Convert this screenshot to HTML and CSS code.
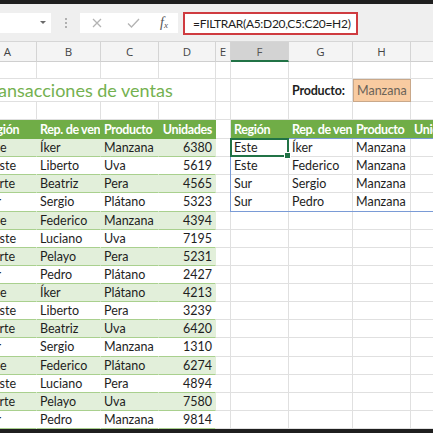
FILE: index.html
```html
<!DOCTYPE html>
<html lang="es">
<head>
<meta charset="utf-8">
<title>FILTRAR</title>
<link rel="stylesheet" href="styles.css">
</head>
<body>
<div class="topbar"></div>
<div class="fbar">
  <div class="namebox"><span class="caret"></span></div>
  <div class="dots"><i></i><i></i><i></i></div>
  <div class="fxbox">
    <svg class="ico-x" width="10" height="10" viewBox="0 0 10 10"><path d="M1 1L9 9M9 1L1 9" stroke="#b3b3b3" stroke-width="1.3" fill="none"/></svg>
    <svg class="ico-ok" width="13" height="10" viewBox="0 0 13 10"><path d="M1 5.5L4.5 9L12 1" stroke="#b3b3b3" stroke-width="1.3" fill="none"/></svg>
    <span class="fx">f<sub>x</sub></span>
  </div>
  <div class="formula">=FILTRAR(A5:D20,C5:C20=H2)</div>
</div>
<div class="sheet">
  <div class="grid">
    <div class="ch">A</div><div class="ch">B</div><div class="ch">C</div><div class="ch">D</div><div class="ch">E</div><div class="ch sel">F</div><div class="ch">G</div><div class="ch">H</div><div class="ch">I</div>

    <div class="c"></div><div class="c"></div><div class="c"></div><div class="c"></div><div class="c"></div><div class="c"></div><div class="c"></div><div class="c"></div><div class="c"></div>

    <div class="c a title">Transacciones de ventas</div><div class="c"></div><div class="c"></div><div class="c bold">Producto:</div><div class="c input">Manzana</div><div class="c"></div>

    <div class="c"></div><div class="c"></div><div class="c"></div><div class="c"></div><div class="c"></div><div class="c"></div><div class="c"></div><div class="c"></div><div class="c"></div>

    <div class="c a th">Región</div><div class="c th">Rep. de vendedor</div><div class="c th">Producto</div><div class="c th num">Unidades</div><div class="c"></div><div class="c th">Región</div><div class="c th">Rep. de vendedor</div><div class="c th">Producto</div><div class="c th">Unidades</div>

    <div class="c a b">Este</div><div class="c b">Íker</div><div class="c b">Manzana</div><div class="c b num">6380</div><div class="c"></div><div class="c">Este</div><div class="c">Íker</div><div class="c">Manzana</div><div class="c num">6380</div>
    <div class="c a w">Oeste</div><div class="c w">Liberto</div><div class="c w">Uva</div><div class="c w num">5619</div><div class="c"></div><div class="c">Este</div><div class="c">Federico</div><div class="c">Manzana</div><div class="c num">4394</div>
    <div class="c a b">Norte</div><div class="c b">Beatriz</div><div class="c b">Pera</div><div class="c b num">4565</div><div class="c"></div><div class="c">Sur</div><div class="c">Sergio</div><div class="c">Manzana</div><div class="c num">1310</div>
    <div class="c a w">Sur</div><div class="c w">Sergio</div><div class="c w">Plátano</div><div class="c w num">5323</div><div class="c"></div><div class="c">Sur</div><div class="c">Pedro</div><div class="c">Manzana</div><div class="c num">9814</div>
    <div class="c a b">Este</div><div class="c b">Federico</div><div class="c b">Manzana</div><div class="c b num">4394</div><div class="c"></div><div class="c"></div><div class="c"></div><div class="c"></div><div class="c"></div>
    <div class="c a w">Oeste</div><div class="c w">Luciano</div><div class="c w">Uva</div><div class="c w num">7195</div><div class="c"></div><div class="c"></div><div class="c"></div><div class="c"></div><div class="c"></div>
    <div class="c a b">Norte</div><div class="c b">Pelayo</div><div class="c b">Pera</div><div class="c b num">5231</div><div class="c"></div><div class="c"></div><div class="c"></div><div class="c"></div><div class="c"></div>
    <div class="c a w">Sur</div><div class="c w">Pedro</div><div class="c w">Plátano</div><div class="c w num">2427</div><div class="c"></div><div class="c"></div><div class="c"></div><div class="c"></div><div class="c"></div>
    <div class="c a b">Este</div><div class="c b">Íker</div><div class="c b">Plátano</div><div class="c b num">4213</div><div class="c"></div><div class="c"></div><div class="c"></div><div class="c"></div><div class="c"></div>
    <div class="c a w">Oeste</div><div class="c w">Liberto</div><div class="c w">Pera</div><div class="c w num">3239</div><div class="c"></div><div class="c"></div><div class="c"></div><div class="c"></div><div class="c"></div>
    <div class="c a b">Norte</div><div class="c b">Beatriz</div><div class="c b">Uva</div><div class="c b num">6420</div><div class="c"></div><div class="c"></div><div class="c"></div><div class="c"></div><div class="c"></div>
    <div class="c a w">Sur</div><div class="c w">Sergio</div><div class="c w">Manzana</div><div class="c w num">1310</div><div class="c"></div><div class="c"></div><div class="c"></div><div class="c"></div><div class="c"></div>
    <div class="c a b">Este</div><div class="c b">Federico</div><div class="c b">Plátano</div><div class="c b num">6274</div><div class="c"></div><div class="c"></div><div class="c"></div><div class="c"></div><div class="c"></div>
    <div class="c a w">Oeste</div><div class="c w">Luciano</div><div class="c w">Pera</div><div class="c w num">4894</div><div class="c"></div><div class="c"></div><div class="c"></div><div class="c"></div><div class="c"></div>
    <div class="c a b">Norte</div><div class="c b">Pelayo</div><div class="c b">Uva</div><div class="c b num">7580</div><div class="c"></div><div class="c"></div><div class="c"></div><div class="c"></div><div class="c"></div>
    <div class="c a w">Sur</div><div class="c w">Pedro</div><div class="c w">Manzana</div><div class="c w num">9814</div><div class="c"></div><div class="c"></div><div class="c"></div><div class="c"></div><div class="c"></div>

    <div class="spill"></div>
    <div class="cursor"><span class="handle"></span></div>
  </div>
</div>
<div class="bottombar"></div>
</body>
</html>
```

FILE: styles.css
```css
html, body {
  margin: 0;
  padding: 0;
  background: #ffffff;
  overflow: hidden;
}
body {
  width: 433px;
  height: 433px;
  font-family: Lato, "Liberation Sans", sans-serif;
  color: #1e1e1e;
}
.topbar {
  height: 4px;
  background: #1f1f1f;
}
.fbar {
  background: #efefef;
  border-bottom: 1px solid #d6d6d6;
  display: flex;
  align-items: flex-start;
  padding-top: 9px;
  box-sizing: border-box;
  height: 38px;
}
.namebox {
  width: 51px;
  height: 20px;
  background: #ffffff;
  position: relative;
  flex: none;
}
.caret {
  position: absolute;
  left: 40px;
  top: 8px;
  width: 0;
  height: 0;
  border-left: 3px solid transparent;
  border-right: 3px solid transparent;
  border-top: 3px solid #6a6a6a;
}
.dots {
  width: 29px;
  height: 20px;
  flex: none;
  display: flex;
  flex-direction: column;
  align-items: center;
  justify-content: center;
  gap: 2px;
}
.dots i {
  display: block;
  width: 2px;
  height: 2px;
  background: #b0b0b0;
}
.fxbox {
  width: 98px;
  height: 20px;
  background: #ffffff;
  flex: none;
  display: flex;
  align-items: center;
  padding-left: 12px;
  box-sizing: border-box;
}
.ico-x { margin-right: 25px; }
.ico-ok { margin-right: 20px; }
.fx {
  font-family: "Liberation Serif", serif;
  font-style: italic;
  font-size: 14px;
  color: #555555;
  line-height: 1;
}
.fx sub {
  font-size: 9px;
  vertical-align: -1px;
}
.formula {
  margin-left: 5px;
  margin-top: -1px;
  width: 175px;
  height: 23px;
  box-sizing: border-box;
  border: 2px solid #cf3b40;
  background: #ffffff;
  font-size: 12px;
  line-height: 19px;
  padding-left: 8px;
  letter-spacing: -0.3px;
  color: #1e1e1e;
  white-space: nowrap;
  overflow: hidden;
  flex: none;
}
.sheet {
  height: 387px;
  overflow: hidden;
}
.grid {
  position: relative;
  margin-left: -21px;
  display: grid;
  grid-template-columns: 58px 64px 58px 57px 15px 58px 64px 58px 64px;
  grid-template-rows: 20px 17px 23px 18px 19px repeat(16, 18.125px);
  width: 496px;
}
.ch {
  background: #f4f4f4;
  border-right: 1px solid #d4d4d4;
  border-bottom: 1px solid #cfcfcf;
  box-sizing: border-box;
  font-family: "Open Sans", sans-serif;
  font-size: 11.5px;
  color: #444444;
  display: flex;
  align-items: center;
  justify-content: center;
}
.ch.sel {
  background: #d3d3d3;
  border-bottom: 2px solid #217346;
  color: #555555;
}
.c {
  box-sizing: border-box;
  border-right: 1px solid #e0e0e0;
  border-bottom: 1px solid #e0e0e0;
  font-size: 12.5px;
  padding: 0 3px;
  display: flex;
  align-items: center;
  white-space: nowrap;
  overflow: hidden;
  min-width: 0;
}
.a { padding-left: 4px; }
.title {
  grid-column: span 4;
  font-size: 18px;
  color: #74b150;
  overflow: visible;
}
.bold {
  font-weight: 700;
  letter-spacing: -0.2px;
}
.input {
  background: #f8cba1;
  color: #6b6358;
  border: 1px solid #c9a88a;
}
.th {
  background: #70ad47;
  color: #ffffff;
  font-weight: 700;
  letter-spacing: -0.35px;
  border-right-color: #70ad47;
  border-bottom-color: #70ad47;
}
.b {
  background: #e2efda;
  border-right-color: #e2efda;
  border-bottom-color: #a9d08e;
}
.w {
  background: #ffffff;
  border-right-color: #ffffff;
  border-bottom-color: #a9d08e;
}
.num { justify-content: flex-end; }
.spill {
  position: absolute;
  grid-column: 6 / 10;
  grid-row: 6 / 10;
  inset: -1px 0 0 -1px;
  border: 1px solid #7a9bd6;
  pointer-events: none;
}
.cursor {
  position: absolute;
  grid-column: 6 / 7;
  grid-row: 6 / 7;
  inset: -1px 0 0 -1px;
  border: 2px solid #217346;
  pointer-events: none;
}
.handle {
  position: absolute;
  right: -4px;
  bottom: -4px;
  width: 5px;
  height: 5px;
  background: #217346;
  border: 1px solid #ffffff;
}
.bottombar {
  height: 4px;
  background: #1f1f1f;
}
```
